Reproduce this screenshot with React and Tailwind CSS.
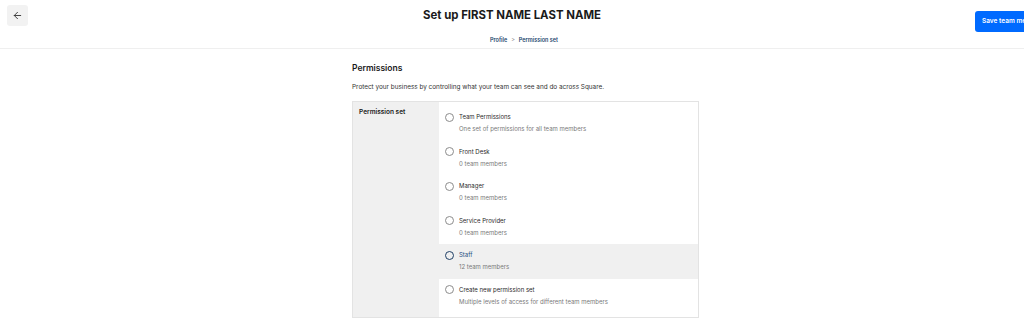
import { ArrowLeft } from "lucide-react";

const sets = [
  { name: "Team Permissions", sub: "One set of permissions for all team members" },
  { name: "Front Desk", sub: "0 team members" },
  { name: "Manager", sub: "0 team members" },
  { name: "Service Provider", sub: "0 team members" },
  { name: "Staff", sub: "12 team members", active: true },
  { name: "Create new permission set", sub: "Multiple levels of access for different team members" },
];

function Row({ item }) {
  return (
    <div className={`h-[34.5px] pl-[6px] pt-[7px] ${item.active ? "bg-[#f0f0f0]" : ""}`}>
      <div className="flex items-center h-[8px]">
        <span className={`w-[9px] h-[9px] rounded-full shrink-0 ${item.active ? "border-[1.5px] border-[#1f3f66]" : "border border-[#8c8c8c]"}`} />
        <span className={`ml-[5px] text-[6px] leading-[8px] ${item.active ? "text-[#1f4c80]" : "text-[#2a2a2a]"}`}>{item.name}</span>
      </div>
      <p className="ml-[14px] mt-[4px] text-[6px] leading-[8px] text-[#7a7a7a]">{item.sub}</p>
    </div>
  );
}

export default function App() {
  return (
    <div className="w-[1024px] h-[325px] overflow-hidden bg-white font-['Inter',sans-serif] text-[#1a1a1a]">
      <header className="relative h-[49px] border-b border-[#efefef] flex justify-between">
        <div className="pl-[7px] pt-[5px]">
          <button className="w-[21px] h-[21px] rounded-[3px] bg-[#f2f2f2] flex items-center justify-center">
            <ArrowLeft className="w-[11px] h-[11px] text-[#333]" strokeWidth={2} />
          </button>
        </div>
        <div className="absolute left-0 right-0 top-0 flex flex-col items-center pointer-events-none">
          <h1 className="mt-[7px] text-[11.4px] leading-[16px] font-bold">Set up FIRST NAME LAST NAME</h1>
          <div className="ml-[24px] mt-[13px] flex items-center gap-[4px] text-[5.5px] leading-[8px] font-semibold text-[#24476e]">
            <span>Profile</span>
            <span className="text-[#888] font-normal">&gt;</span>
            <span>Permission set</span>
          </div>
        </div>
        <div className="pt-[5px] -mr-[29px]">
          <button className="h-[21px] px-[7px] rounded-[3px] bg-[#006aff] text-white text-[6.5px] font-semibold whitespace-nowrap">
            Save team members
          </button>
        </div>
      </header>

      <main className="pl-[352px] w-[699px] box-content">
        <h2 className="mt-[14px] text-[8.5px] leading-[11px] font-semibold">Permissions</h2>
        <p className="mt-[9px] text-[6.4px] leading-[8px] text-[#333]">
          Protect your business by controlling what your team can see and do across Square.
        </p>
        <div className="mt-[10px] w-[347px] flex border border-[#e3e3e3]">
          <div className="w-[86px] bg-[#f0f0f0] px-[6px] pt-[6px]">
            <p className="text-[6.5px] leading-[8px] font-semibold">Permission set</p>
          </div>
          <div className="flex-1 pt-[4px] pb-[4px]">
            {sets.map(s => <Row key={s.name} item={s} />)}
          </div>
        </div>
      </main>
    </div>
  );
}
